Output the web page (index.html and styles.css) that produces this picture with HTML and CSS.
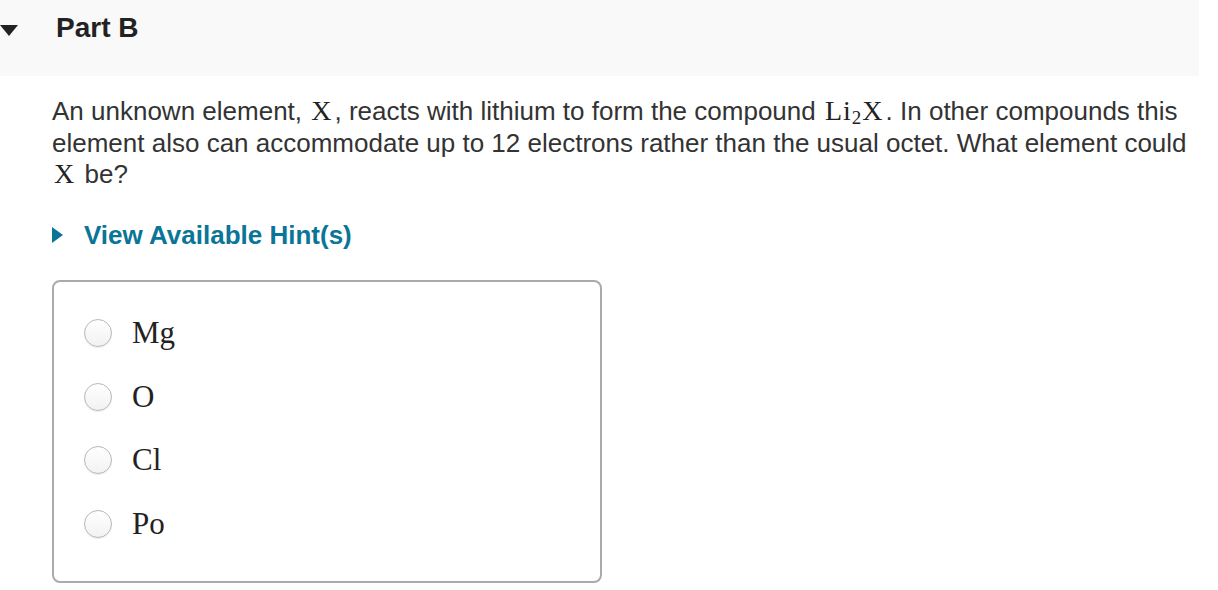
FILE: index.html
```html
<!DOCTYPE html>
<html>
<head>
<meta charset="utf-8">
<link rel="stylesheet" href="styles.css">
</head>
<body>
<div class="page">
  <div class="part-header">
    <span class="caret-down"></span>
    <h2 class="part-title">Part B</h2>
  </div>
  <div class="part-body">
    <p class="question">An unknown element, <span class="math">X</span>, reacts with lithium to form the compound <span class="math">Li<sub class="msub">2</sub>X</span>. In other compounds this element also can accommodate up to 12 electrons rather than the usual octet. What element could <span class="math">X</span> be?</p>
    <div class="hint">
      <span class="caret-right"></span>
      <span class="hint-label">View Available Hint(s)</span>
    </div>
    <div class="choices">
      <div class="choice"><span class="radio"></span><span class="choice-label">Mg</span></div>
      <div class="choice"><span class="radio"></span><span class="choice-label">O</span></div>
      <div class="choice"><span class="radio"></span><span class="choice-label">Cl</span></div>
      <div class="choice"><span class="radio"></span><span class="choice-label">Po</span></div>
    </div>
  </div>
</div>
</body>
</html>
```

FILE: styles.css
```css
html, body {
  margin: 0;
  padding: 0;
  background: #fff;
}
.page {
  width: 1199px;
  font-family: "Liberation Sans", Arial, sans-serif;
  color: #333;
}
.part-header {
  height: 76px;
  background: #f9f9f9;
  display: flex;
  align-items: flex-start;
  padding-top: 10px;
  box-sizing: border-box;
}
.caret-down {
  width: 0;
  height: 0;
  border-left: 9.5px solid transparent;
  border-right: 9.5px solid transparent;
  border-top: 11px solid #222;
  margin-top: 15px;
  margin-right: 38px;
}
.part-title {
  margin: 0;
  font-size: 28px;
  line-height: 36px;
  font-weight: bold;
  color: #222;
}
.part-body {
  padding-left: 52px;
}
.question {
  margin: 20px 0 0 0;
  font-size: 26px;
  line-height: 31.5px;
  color: #333;
}
.math {
  font-family: "Liberation Serif", "Times New Roman", serif;
  font-size: 28px;
  line-height: 20px;
  letter-spacing: 1px;
  padding: 0 2px;
  color: #222;
}
.msub {
  font-size: 19px;
  line-height: 0;
  vertical-align: -4px;
}
.hint {
  margin-top: 29px;
  display: flex;
  align-items: center;
  height: 30px;
}
.caret-right {
  width: 0;
  height: 0;
  border-top: 8.5px solid transparent;
  border-bottom: 8.5px solid transparent;
  border-left: 11px solid #0b7597;
  margin-right: 21px;
}
.hint-label {
  font-size: 26px;
  font-weight: bold;
  color: #0b7597;
  line-height: 30px;
}
.choices {
  margin-top: 30px;
  width: 550px;
  height: 303px;
  box-sizing: border-box;
  border: 2px solid #aaa;
  border-radius: 8px;
  padding: 20px 0 0 30px;
}
.choice {
  height: 63.5px;
  display: flex;
  align-items: center;
}
.radio {
  width: 26px;
  height: 26px;
  border-radius: 50%;
  border: 1px solid #b8b8b8;
  background: linear-gradient(#ffffff, #f2f2f2);
  box-shadow: 0 1px 1px rgba(0,0,0,0.08);
  margin-right: 20px;
  flex: none;
}
.choice-label {
  font-family: "Liberation Serif", "Times New Roman", serif;
  font-size: 31px;
  color: #222;
}
```
